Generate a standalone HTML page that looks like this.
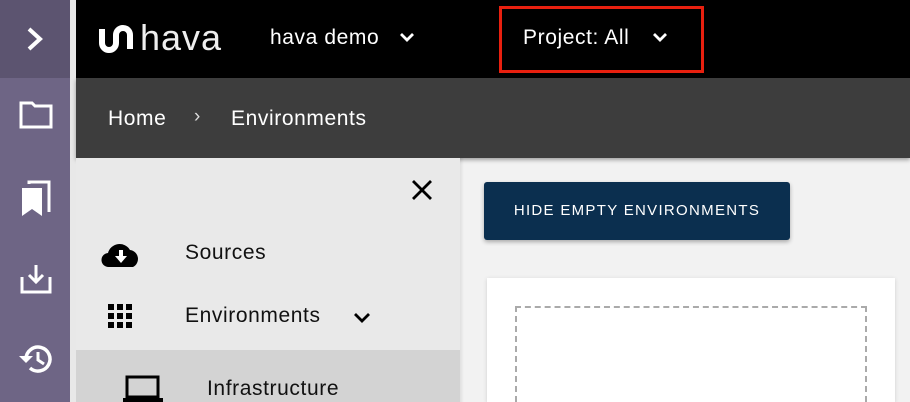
<!DOCTYPE html>
<html><head><style>
*{margin:0;padding:0;box-sizing:border-box}
html,body{width:910px;height:402px;overflow:hidden}
body{position:relative;font-family:"Liberation Sans",sans-serif;background:#f2f2f2}
.a{position:absolute}
.t{letter-spacing:.6px}
</style></head><body>
<div class="a" style="left:0;top:0;width:70px;height:402px;background:#6e6585"></div>
<div class="a" style="left:0;top:0;width:70px;height:78px;background:#5c5470"></div>
<div class="a" style="left:70px;top:0;width:6px;height:402px;background:#e8e8e8"></div>
<div class="a" style="left:76px;top:0;width:834px;height:78px;background:#000"></div>
<div class="a" style="left:76px;top:78px;width:834px;height:80px;background:#3d3d3d;box-shadow:0 2px 4px rgba(0,0,0,.35)"></div>
<div class="a" style="left:76px;top:158px;width:384px;height:244px;background:#e9e9e9"></div>
<div class="a" style="left:76px;top:350px;width:384px;height:52px;background:#d3d3d3"></div>
<div class="a" style="left:460px;top:158px;width:4px;height:244px;background:linear-gradient(90deg,rgba(0,0,0,.08),transparent)"></div>
<svg class="a" style="left:24px;top:26px" width="24" height="26" viewBox="0 0 24 26"><path d="M5 3l11 10L5 23" fill="none" stroke="#fff" stroke-width="4"/></svg>
<svg class="a" style="left:19px;top:101px" width="34" height="28" viewBox="0 0 34 28"><path d="M2 2h11l3 3h16v21H2z" fill="none" stroke="#fff" stroke-width="3"/></svg>
<svg class="a" style="left:20px;top:180px" width="32" height="38" viewBox="0 0 32 38"><path d="M2 8h20v28l-10-7-10 7z" fill="#fff"/><path d="M9 4V2h20v30" fill="none" stroke="#fff" stroke-width="3"/></svg>
<svg class="a" style="left:20px;top:263px" width="32" height="32" viewBox="0 0 32 32"><path d="M2 14v15h28V14M16 2v17M9 12l7 7 7-7" fill="none" stroke="#fff" stroke-width="3"/></svg>
<svg class="a" style="left:18px;top:342px" width="36" height="34" viewBox="0 0 36 34"><path d="M8 17a12 12 0 1 1 4 9" fill="none" stroke="#fff" stroke-width="3.5"/><path d="M1 14l7 7 7-7z" fill="#fff"/><path d="M20 10v8l6 4" fill="none" stroke="#fff" stroke-width="3"/></svg>
<svg class="a" style="left:98px;top:25px" width="40" height="28" viewBox="0 0 40 28"><path d="M4 4v14a7 7 0 0 0 14 0V10a7 7 0 0 1 14 0v14" fill="none" stroke="#fff" stroke-width="6"/></svg>
<div class="a" style="left:140px;top:17px;color:#eee;font-size:36px;letter-spacing:1px">hava</div>
<div class="a t" style="left:270px;top:26px;color:#fff;font-size:21px">hava demo</div>
<svg class="a" style="left:399px;top:31px" width="16" height="12" viewBox="0 0 16 12"><path d="M2 3l6 6 6-6" fill="none" stroke="#fff" stroke-width="2.8"/></svg>
<div class="a" style="left:499px;top:6px;width:205px;height:67px;border:3px solid #e8200f"></div>
<div class="a t" style="left:523px;top:26px;color:#fff;font-size:21px">Project: All</div>
<svg class="a" style="left:652px;top:31px" width="16" height="12" viewBox="0 0 16 12"><path d="M2 3l6 6 6-6" fill="none" stroke="#fff" stroke-width="2.8"/></svg>
<div class="a t" style="left:108px;top:107px;color:#fff;font-size:21px">Home</div>
<div class="a" style="left:194px;top:106px;color:#ddd;font-size:19px">›</div>
<div class="a t" style="left:231px;top:107px;color:#fff;font-size:21px">Environments</div>
<svg class="a" style="left:410px;top:178px" width="24" height="24" viewBox="0 0 24 24"><path d="M3 3l18 18M21 3L3 21" stroke="#000" stroke-width="2.8"/></svg>
<svg class="a" style="left:101px;top:240px" width="40" height="28" viewBox="0 0 40 28"><path d="M8 27a7 7 0 0 1-1-14 12 12 0 0 1 22-3 9 9 0 0 1 3 17z" fill="#000"/><path d="M18 10h4v6h4l-6 7-6-7h4z" fill="#fff"/></svg>
<svg class="a" style="left:107px;top:303px" width="27" height="27" viewBox="0 0 27 27" fill="#000"><rect x="1" y="1" width="6" height="6"/><rect x="10" y="1" width="6" height="6"/><rect x="19" y="1" width="6" height="6"/><rect x="1" y="10" width="6" height="6"/><rect x="10" y="10" width="6" height="6"/><rect x="19" y="10" width="6" height="6"/><rect x="1" y="19" width="6" height="6"/><rect x="10" y="19" width="6" height="6"/><rect x="19" y="19" width="6" height="6"/></svg>
<div class="a t" style="left:185px;top:241px;color:#111;font-size:21px">Sources</div>
<div class="a t" style="left:185px;top:304px;color:#111;font-size:21px">Environments</div>
<svg class="a" style="left:353px;top:311px" width="18" height="14" viewBox="0 0 18 14"><path d="M2 3l7 7 7-7" fill="none" stroke="#000" stroke-width="2.8"/></svg>
<svg class="a" style="left:123px;top:375px" width="40" height="27" viewBox="0 0 40 27"><rect x="4" y="2" width="31" height="20" fill="none" stroke="#000" stroke-width="3"/><rect x="0" y="23" width="40" height="4" fill="#000"/></svg>
<div class="a t" style="left:207px;top:377px;color:#111;font-size:21px">Infrastructure</div>
<div class="a" style="left:484px;top:182px;width:306px;height:58px;background:#0b2f4f;border-radius:3px;box-shadow:0 2px 4px rgba(0,0,0,.3);color:#fff;font-size:15px;letter-spacing:1.3px;text-align:center;line-height:58px">HIDE EMPTY ENVIRONMENTS</div>
<div class="a" style="left:487px;top:278px;width:408px;height:124px;background:#fff;box-shadow:0 1px 4px rgba(0,0,0,.15)"></div>
<div class="a" style="left:515px;top:306px;width:352px;height:96px;border:2px dashed #aaa;border-bottom:none"></div>
</body></html>
